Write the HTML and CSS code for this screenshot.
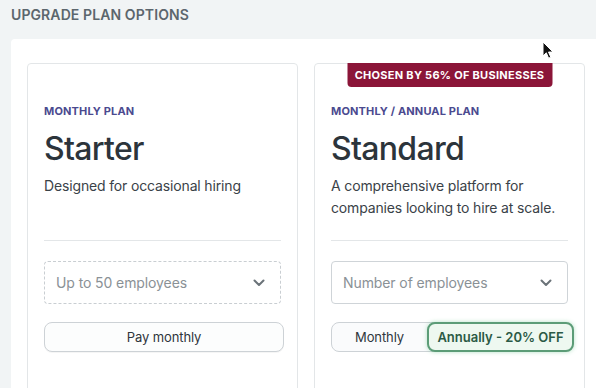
FILE: index.html
```html
<!DOCTYPE html>
<html>
<head>
<meta charset="utf-8">
<link rel="stylesheet" href="styles.css">
</head>
<body>
<h1 class="page-title">UPGRADE PLAN OPTIONS</h1>
<div class="panel">
  <div class="card">
    <div class="plan-label">MONTHLY PLAN</div>
    <div class="plan-name">Starter</div>
    <p class="plan-desc">Designed for occasional hiring</p>
    <hr class="divider">
    <div class="select select-dashed">
      <span>Up to 50 employees</span>
      <svg class="chev" width="12" height="8" viewBox="0 0 12 8"><path d="M1.5 1.5 L6 6 L10.5 1.5" fill="none" stroke="#6b7379" stroke-width="2" stroke-linecap="round" stroke-linejoin="round"/></svg>
    </div>
    <button class="btn">Pay monthly</button>
  </div>
  <div class="card">
    <div class="badge">CHOSEN BY 56% OF BUSINESSES</div>
    <div class="plan-label">MONTHLY / ANNUAL PLAN</div>
    <div class="plan-name">Standard</div>
    <p class="plan-desc">A comprehensive platform for companies looking to hire at scale.</p>
    <hr class="divider">
    <div class="select">
      <span>Number of employees</span>
      <svg class="chev" width="12" height="8" viewBox="0 0 12 8"><path d="M1.5 1.5 L6 6 L10.5 1.5" fill="none" stroke="#6b7379" stroke-width="2" stroke-linecap="round" stroke-linejoin="round"/></svg>
    </div>
    <div class="toggle">
      <div class="seg">Monthly</div>
      <div class="seg seg-active">Annually - 20% OFF</div>
    </div>
  </div>
</div>
<svg class="cursor" width="13" height="19" viewBox="0 0 13 19"><path d="M1 1 L1 15 L4.3 11.8 L6.6 17.2 L8.8 16.2 L6.5 11 L11 11 Z" fill="#111" stroke="#fff" stroke-width="1"/></svg>
</body>
</html>
```

FILE: styles.css
```css
html, body {
  margin: 0;
  padding: 0;
}
body {
  background: #f1f4f5;
  font-family: Inter, "Noto Sans", sans-serif;
  width: 596px;
  height: 388px;
  overflow: hidden;
  position: relative;
}
.page-title {
  margin: 5px 0 0 11px;
  height: 20px;
  font-size: 14px;
  line-height: 20px;
  font-weight: 600;
  color: #5c666d;
  letter-spacing: 0.1px;
}
.panel {
  margin: 14px 0 0 11px;
  width: 585px;
  height: 349px;
  background: #fff;
  border-radius: 4px 0 0 0;
  padding: 24px 0 0 16px;
  display: flex;
  gap: 16px;
  box-sizing: border-box;
  overflow: hidden;
}
.card {
  position: relative;
  width: 271px;
  height: 340px;
  flex: none;
  box-sizing: border-box;
  border: 1px solid #e3e6e8;
  border-radius: 4px;
  padding: 39px 16px 0 16px;
}
.badge {
  position: absolute;
  top: -1px;
  left: 50%;
  transform: translateX(-50%);
  width: 205px;
  height: 24px;
  background: #8b1538;
  color: #fff;
  border-radius: 0 0 4px 4px;
  font-size: 11px;
  font-weight: 700;
  letter-spacing: 0.28px;
  line-height: 24px;
  text-align: center;
  white-space: nowrap;
}
.plan-label {
  font-size: 11px;
  line-height: 16px;
  font-weight: 700;
  color: #4b4a8f;
  letter-spacing: 0.15px;
}
.plan-name {
  margin-top: 10px;
  font-size: 32px;
  line-height: 40px;
  font-weight: 500;
  color: #2c343b;
  letter-spacing: -0.7px;
}
.plan-desc {
  margin: 6px 0 0;
  min-height: 44px;
  font-size: 14px;
  line-height: 22px;
  color: #3a4248;
  letter-spacing: -0.15px;
}
.divider {
  margin: 21px 0 0;
  border: 0;
  border-top: 1px solid #e3e6e8;
  height: 0;
}
.select {
  margin-top: 20px;
  height: 43px;
  box-sizing: border-box;
  border: 1px solid #cfd4d8;
  border-radius: 4px;
  padding: 0 15px 0 11px;
  display: flex;
  align-items: center;
  justify-content: space-between;
  font-size: 14px;
  letter-spacing: -0.1px;
  color: #8a9196;
}
.select-dashed {
  border: 1px dashed #c9ced2;
}
.chev {
  display: block;
}
.btn {
  display: block;
  margin-top: 18px;
  width: 240px;
  height: 30px;
  box-sizing: border-box;
  border: 1px solid #cdd2d6;
  border-radius: 8px;
  background: #fcfdfd;
  font-family: inherit;
  font-size: 13px;
  letter-spacing: -0.1px;
  color: #2f363c;
  box-shadow: 0 1px 0 rgba(0,0,0,0.04);
}
.toggle {
  margin-top: 18px;
  height: 30px;
  box-sizing: border-box;
  border: 1px solid #cdd2d6;
  border-radius: 8px;
  background: #fafbfc;
  display: flex;
  align-items: stretch;
}
.seg {
  flex: 1;
  display: flex;
  align-items: center;
  justify-content: center;
  font-size: 13px;
  letter-spacing: -0.1px;
  color: #2f363c;
}
.seg-active {
  flex: none;
  width: 147px;
  margin: -1px -7px -1px 0;
  box-sizing: border-box;
  border: 2px solid #5c9c77;
  border-radius: 8px;
  background: #eef8f0;
  color: #2b5a45;
  font-weight: 600;
  letter-spacing: 0;
  box-shadow: 0 0 4px rgba(90, 190, 130, 0.45);
}
.cursor {
  position: absolute;
  left: 542px;
  top: 41px;
}
```
